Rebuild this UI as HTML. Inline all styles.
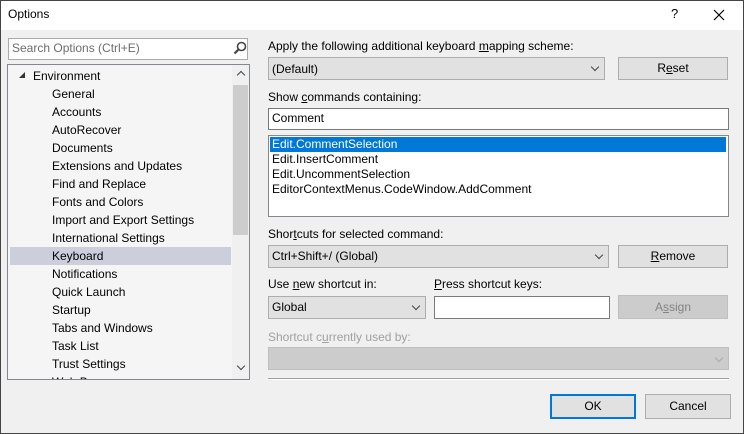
<!DOCTYPE html><html><head><style>
body{margin:0;width:744px;height:434px;overflow:hidden;font-family:"Segoe UI","Liberation Sans",sans-serif;font-size:12px;color:#000}
.win{position:absolute;left:0;top:0;width:744px;height:434px;background:#f0f0f0}
.t{position:absolute;white-space:nowrap}
.box{position:absolute;box-sizing:border-box}
.tb{background:#fff;border:1px solid #7a7a7a}
.cb{background:#e1e1e1;border:1px solid #adadad}
.btn{background:#e1e1e1;border:1px solid #adadad;text-align:center}
u{text-decoration:underline}
.row{position:absolute;left:44px;height:18px;line-height:18px}
.chev{position:absolute;width:5px;height:5px;border-right:1px solid #444;border-bottom:1px solid #444;transform:rotate(45deg)}
</style></head><body><div class="win">
<div class="box" style="left:0;top:0;width:744px;height:30px;background:#fff"></div>
<div class="t" style="left:8px;top:7px;font-size:12px">Options</div>
<div class="t" style="left:671px;top:6px;font-size:13px">?</div>
<svg class="box" style="left:713px;top:9px" width="12" height="12"><path d="M1 1L11 11M11 1L1 11" stroke="#000" stroke-width="1.2"/></svg>
<div class="box tb" style="left:8px;top:38px;width:240px;height:22px;border-color:#ababab"></div>
<div class="t" style="left:12px;top:41px;color:#6d6d6d">Search Options (Ctrl+E)</div>
<svg class="box" style="left:233px;top:41px" width="14" height="14"><circle cx="8.5" cy="5.5" r="4" fill="none" stroke="#444" stroke-width="1.6"/><path d="M5.5 8.5L1.5 12.5" stroke="#444" stroke-width="2.2"/></svg>
<div class="box" style="left:7px;top:64px;width:243px;height:316px;border:1px solid #828790;background:#f5f5f5;overflow:hidden">
<div class="box" style="left:224px;top:0;width:17px;height:314px;background:#f0f0f0"></div>
<div class="box" style="left:225px;top:20px;width:15px;height:150px;background:#cdcdcd"></div>
<div class="chev" style="left:230px;top:7px;transform:rotate(225deg)"></div>
<div class="chev" style="left:230px;top:298px"></div>
<div class="box" style="left:2px;top:182px;width:221px;height:18px;background:#cccedb"></div>
<svg class="box" style="left:11px;top:7px" width="7" height="7"><path d="M6 0V6H0Z" fill="#333"/></svg>
<div class="row" style="left:25px;top:2px">Environment</div>
<div class="row" style="top:20px">General</div>
<div class="row" style="top:38px">Accounts</div>
<div class="row" style="top:56px">AutoRecover</div>
<div class="row" style="top:74px">Documents</div>
<div class="row" style="top:92px">Extensions and Updates</div>
<div class="row" style="top:110px">Find and Replace</div>
<div class="row" style="top:128px">Fonts and Colors</div>
<div class="row" style="top:146px">Import and Export Settings</div>
<div class="row" style="top:164px">International Settings</div>
<div class="row" style="top:182px">Keyboard</div>
<div class="row" style="top:200px">Notifications</div>
<div class="row" style="top:218px">Quick Launch</div>
<div class="row" style="top:236px">Startup</div>
<div class="row" style="top:254px">Tabs and Windows</div>
<div class="row" style="top:272px">Task List</div>
<div class="row" style="top:290px">Trust Settings</div>
<div class="row" style="top:308px">Web Browser</div>
</div>
<div class="t" style="left:268px;top:39px">Apply the following additional keyboard <u>m</u>apping scheme:</div>
<div class="box cb" style="left:268px;top:57px;width:337px;height:23px"></div>
<div class="t" style="left:272px;top:62px">(Default)</div>
<div class="chev" style="left:592px;top:64px"></div>
<div class="box btn" style="left:618px;top:57px;width:110px;height:23px;line-height:21px">R<u>e</u>set</div>
<div class="t" style="left:268px;top:90px">Show <u>c</u>ommands containing:</div>
<div class="box tb" style="left:268px;top:108px;width:461px;height:22px"></div>
<div class="t" style="left:272px;top:111px">Comment</div>
<div class="box tb" style="left:268px;top:135px;width:461px;height:82px;border-color:#828790"></div>
<div class="box" style="left:270px;top:137px;width:456px;height:15px;background:#0078d7"></div>
<div class="t" style="left:272px;top:137px;color:#fff;line-height:15px">Edit.CommentSelection</div>
<div class="t" style="left:272px;top:152px;line-height:15px">Edit.InsertComment</div>
<div class="t" style="left:272px;top:167px;line-height:15px">Edit.UncommentSelection</div>
<div class="t" style="left:272px;top:182px;line-height:15px">EditorContextMenus.CodeWindow.AddComment</div>
<div class="t" style="left:268px;top:227px">Shor<u>t</u>cuts for selected command:</div>
<div class="box cb" style="left:268px;top:245px;width:341px;height:23px"></div>
<div class="t" style="left:272px;top:249px">Ctrl+Shift+/ (Global)</div>
<div class="chev" style="left:596px;top:252px"></div>
<div class="box btn" style="left:618px;top:245px;width:110px;height:23px;line-height:21px"><u>R</u>emove</div>
<div class="t" style="left:268px;top:277px">Use <u>n</u>ew shortcut in:</div>
<div class="t" style="left:434px;top:277px"><u>P</u>ress shortcut keys:</div>
<div class="box cb" style="left:268px;top:296px;width:158px;height:23px"></div>
<div class="t" style="left:272px;top:300px">Global</div>
<div class="chev" style="left:413px;top:303px"></div>
<div class="box tb" style="left:434px;top:296px;width:176px;height:23px"></div>
<div class="box btn" style="left:618px;top:295px;width:110px;height:24px;line-height:22px;background:#cccccc;border-color:#bfbfbf;color:#838383">A<u>s</u>sign</div>
<div class="t" style="left:268px;top:330px;color:#a0a0a0">Shortcut c<u>u</u>rrently used by:</div>
<div class="box" style="left:268px;top:347px;width:461px;height:23px;background:#cccccc;border:1px solid #bfbfbf"></div>
<div class="chev" style="left:716px;top:355px;border-color:#aaa"></div>
<div class="box" style="left:268px;top:378px;width:461px;height:1px;background:#a0a0a0"></div>
<div class="box" style="left:268px;top:379px;width:461px;height:1px;background:#fff"></div>
<div class="box btn" style="left:550px;top:394px;width:86px;height:25px;line-height:21px;border:2px solid #0078d7">OK</div>
<div class="box btn" style="left:645px;top:394px;width:86px;height:25px;line-height:23px">Cancel</div>
<div class="box" style="left:0;top:0;width:744px;height:434px;border:1px solid #444"></div>
</div></body></html>
